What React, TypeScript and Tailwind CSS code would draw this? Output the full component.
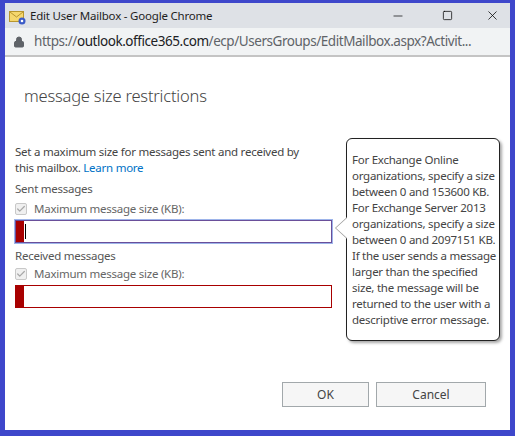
import { Lock, Minus, Square, X, Check } from 'lucide-react'

const font = { fontFamily: '"Segoe UI", "Noto Sans", "Open Sans", sans-serif' }

const body = 'text-[11.5px] tracking-[-0.25px] leading-[16px]'

const tipLines = [
  'For Exchange Online',
  'organizations, specify a size',
  'between 0 and 153600 KB.',
  'For Exchange Server 2013',
  'organizations, specify a size',
  'between 0 and 2097151 KB.',
  'If the user sends a message',
  'larger than the specified',
  'size, the message will be',
  'returned to the user with a',
  'descriptive error message.',
]

function MailIcon() {
  return (
    <svg width="18" height="16" viewBox="0 0 18 16">
      <rect x="0.5" y="2.5" width="14" height="10" fill="#f5d76e" stroke="#b8962e" />
      <path d="M1 3 L7.5 8 L14 3" fill="none" stroke="#b8962e" />
      <circle cx="13" cy="12" r="3.5" fill="#3b5bc8" />
      <circle cx="13" cy="12" r="1.3" fill="#fff" />
    </svg>
  )
}

function SizeField({ focused, label }: { focused?: boolean; label: string }) {
  return (
    <div className="flex flex-col">
      <div className={`${body} text-[#555]`}>{label}</div>
      <div className={`flex items-center gap-[7px] ${focused ? 'mt-[4px]' : 'mt-[2px]'} ${body} text-[#666]`}>
        <span className="w-[12px] h-[12px] border border-[#c8c8c8] bg-[#f0f0f0] rounded-[2px] flex items-center justify-center">
          <Check className="w-[10px] h-[10px] text-[#a8a8a8]" strokeWidth={3} />
        </span>
        Maximum message size (KB):
      </div>
      <div
        className={`mt-[3px] h-[23px] w-[317px] flex bg-white ${
          focused
            ? 'border border-[#6a4f9a] shadow-[0_0_0_1px_#9db4ea]'
            : 'border border-[#a80000]'
        }`}
      >
        <span className="w-[8px] h-full bg-[#a80000]" />
        {focused && <span className="ml-[1px] mt-[3px] w-[1px] h-[15px] bg-black" />}
      </div>
    </div>
  )
}

export default function App() {
  return (
    <div className="w-[515px] h-[436px] bg-[#3e47cb] px-[5px] pt-[3px] pb-[6px] overflow-hidden" style={font}>
      <div className="flex flex-col h-full bg-white">
        {/* Title bar */}
        <div className="h-[25px] bg-[#dee1e6] flex items-center">
          <div className="ml-[4px] mt-[2px]">
            <MailIcon />
          </div>
          <span className="ml-[3px] text-[11.5px] tracking-[-0.2px] text-[#1e1e1e]">Edit User Mailbox - Google Chrome</span>
          <div className="ml-auto flex items-center">
            <div className="w-[44px] flex justify-center">
              <Minus className="w-[14px] h-[14px] text-black" strokeWidth={1.2} />
            </div>
            <div className="w-[54px] flex justify-center">
              <Square className="w-[11px] h-[11px] text-black" strokeWidth={1.6} />
            </div>
            <div className="w-[36px] flex justify-center">
              <X className="w-[15px] h-[15px] text-black" strokeWidth={1.2} />
            </div>
          </div>
        </div>
        {/* Address bar */}
        <div className="h-[29px] bg-[#f1f3f4] border-b-2 border-[#c4c4c4] flex items-center">
          <Lock className="ml-[8px] w-[12px] h-[12px] text-[#5f6368]" fill="#5f6368" strokeWidth={2} />
          <span className="ml-[9px] text-[13.5px] tracking-[-0.45px] whitespace-nowrap">
            <span className="text-[#5f6368]">https://</span>
            <span className="text-[#202124]">outlook.office365.com</span>
            <span className="text-[#5f6368]">/ecp/UsersGroups/EditMailbox.aspx?Activit...</span>
          </span>
        </div>

        {/* Content */}
        <div className="flex-1 flex flex-col px-[10px]">
          <div className="mt-[27px] ml-[9px] text-[16.5px] tracking-[-0.2px] font-light text-[#444] leading-[24px]">
            message size restrictions
          </div>

          <div className="flex mt-[36px]">
            <div className="flex flex-col w-[320px]">
              <p className={`${body} text-[#444] w-[300px]`}>
                Set a maximum size for messages sent and received by this mailbox.{' '}
                <span className="text-[#0072c6]">Learn more</span>
              </p>
              <div className="mt-[5px]">
                <SizeField focused label="Sent messages" />
              </div>
              <div className="mt-[5px]">
                <SizeField label="Received messages" />
              </div>
            </div>

            {/* Callout */}
            <div className="relative ml-[14px] -mt-[6px] w-[159px] h-[203px] bg-white border border-[#222] rounded-[6px] shadow-[2px_2px_3px_rgba(0,0,0,0.35)] pl-[5px] pt-[13px]">
              <div className="absolute left-[-12px] top-[78px] w-0 h-0 border-y-[11px] border-y-transparent border-r-[12px] border-r-[#9a9a9a]" />
              <div className="absolute left-[-11px] top-[79px] w-0 h-0 border-y-[10px] border-y-transparent border-r-[11px] border-r-white" />
              {tipLines.map((line, i) => (
                <div key={i} className={`${body} text-[#444] whitespace-nowrap`}>
                  {line}
                </div>
              ))}
            </div>
          </div>

          <div className="mt-auto mb-[23px] flex justify-end gap-[7px] pr-[14px]">
            <button className="w-[87px] h-[25px] border border-[#a2a8ab] bg-[#f6f6f6] text-[12px] text-[#444]">OK</button>
            <button className="w-[110px] h-[25px] border border-[#a2a8ab] bg-[#f6f6f6] text-[12px] text-[#444]">Cancel</button>
          </div>
        </div>
      </div>
    </div>
  )
}
